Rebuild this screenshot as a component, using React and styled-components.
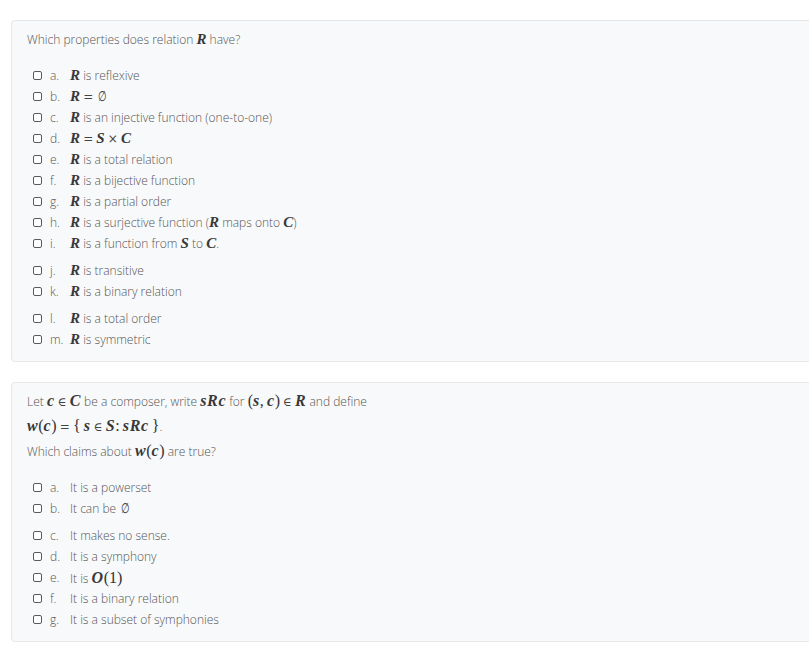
import styled, { createGlobalStyle } from 'styled-components';

const GlobalStyle = createGlobalStyle`
    body {
        margin: 0;
        background: #fff;
        overflow-x: hidden;
        font-family: "Open Sans", "Liberation Sans", sans-serif;
    }
`;

const Page = styled.div`
    display: flex;
    flex-direction: column;
    gap: 20px;
    padding: 20px 0 8px 11px;
`;

const Card = styled.div`
    margin-right: -20px;
    background: #f8f9fa;
    border: 1px solid #e6e7e9;
    border-radius: 4px;
    padding: 6px 15px 11px;
`;

const Prompt = styled.div`
    margin-bottom: 13px;
`;

const PromptLine = styled.div`
    font-size: 12px;
    font-weight: 300;
    line-height: 24px;
    color: #555;
`;

const Options = styled.div`
    display: flex;
    flex-direction: column;
    padding-left: 6px;
`;

const Option = styled.div`
    display: flex;
    align-items: center;
    height: 21px;
    margin-top: ${p => (p.$spaced ? '6px' : '0')};
    font-size: 12px;
    font-weight: 300;
    color: #555;
`;

const Box = styled.span`
    width: 7px;
    height: 7px;
    border: 1.5px solid #5a5a5a;
    border-radius: 2px;
    background: #fff;
    margin-right: 8px;
    flex-shrink: 0;
`;

const Letter = styled.span`
    width: 20px;
    flex-shrink: 0;
`;

const M = styled.span`
    font-family: "Liberation Serif", "DejaVu Serif", serif;
    font-style: italic;
    font-weight: 600;
    font-size: ${p => (p.$big ? '16px' : '15px')};
    letter-spacing: ${p => (p.$big ? '0.6px' : '0')};
    color: #383838;
`;

const Up = styled.span`
    font-family: "Liberation Serif", "DejaVu Serif", serif;
    font-size: 16px;
    font-weight: 400;
    color: #333;
`;

const Empty = styled.span`
    display: inline-block;
    font-family: "DejaVu Serif", serif;
    font-size: 14px;
    color: #333;
    transform: scaleX(0.7);
`;

const Op = styled.span`
    font-family: "DejaVu Serif", "Liberation Serif", serif;
    font-size: 12px;
    font-weight: 400;
    color: #444;
`;

const questions = [
    {
        id: 1,
        text: [
            <>Which properties does relation <M>R</M> have?</>,
        ],
        options: [
            { letter: 'a.', body: <><M>R</M> is reflexive</> },
            { letter: 'b.', body: <><M>R</M> <Op>=</Op> <Empty>∅</Empty></> },
            { letter: 'c.', body: <><M>R</M> is an injective function (one-to-one)</> },
            { letter: 'd.', body: <><M>R</M> <Op>=</Op> <M>S</M> <Op>×</Op> <M>C</M></> },
            { letter: 'e.', body: <><M>R</M> is a total relation</> },
            { letter: 'f.', body: <><M>R</M> is a bijective function</> },
            { letter: 'g.', body: <><M>R</M> is a partial order</> },
            { letter: 'h.', body: <><M>R</M> is a surjective function (<M>R</M> maps onto <M>C</M>)</> },
            { letter: 'i.', body: <><M>R</M> is a function from <M>S</M> to <M>C</M>.</> },
            { letter: 'j.', body: <><M>R</M> is transitive</>, spaced: true },
            { letter: 'k.', body: <><M>R</M> is a binary relation</> },
            { letter: 'l.', body: <><M>R</M> is a total order</>, spaced: true },
            { letter: 'm.', body: <><M>R</M> is symmetric</> },
        ],
    },
    {
        id: 2,
        text: [
            <>Let <M $big>c</M> <Op>∈</Op> <M $big>C</M> be a composer, write <M $big>sRc</M> for <Up>(</Up><M $big>s</M><Up>,</Up> <M $big>c</M><Up>)</Up> <Op>∈</Op> <M $big>R</M> and define</>,
            <><M $big>w</M><Up>(</Up><M $big>c</M><Up>)</Up> <Op>=</Op> <Up>{'{'}</Up> <M $big>s</M> <Op>∈</Op> <M $big>S</M><Up>:</Up> <M $big>sRc</M> <Up>{'}'}</Up>.</>,
            <>Which claims about <M $big>w</M><Up>(</Up><M $big>c</M><Up>)</Up> are true?</>,
        ],
        options: [
            { letter: 'a.', body: <>It is a powerset</> },
            { letter: 'b.', body: <>It can be <Empty>∅</Empty></> },
            { letter: 'c.', body: <>It makes no sense.</>, spaced: true },
            { letter: 'd.', body: <>It is a symphony</> },
            { letter: 'e.', body: <>It is <M $big>O</M><Up>(1)</Up></> },
            { letter: 'f.', body: <>It is a binary relation</> },
            { letter: 'g.', body: <>It is a subset of symphonies</> },
        ],
    },
];

const App = () => (
    <Page>
        <GlobalStyle />
        {questions.map(q => (
            <Card key={q.id}>
                <Prompt>
                    {q.text.map((line, i) => <PromptLine key={i}>{line}</PromptLine>)}
                </Prompt>
                <Options>
                    {q.options.map(opt => (
                        <Option key={opt.letter} $spaced={opt.spaced}>
                            <Box />
                            <Letter>{opt.letter}</Letter>
                            <span>{opt.body}</span>
                        </Option>
                    ))}
                </Options>
            </Card>
        ))}
    </Page>
);

export default App;
